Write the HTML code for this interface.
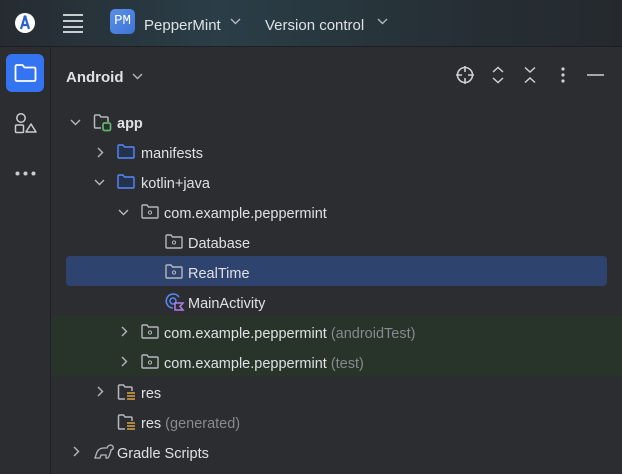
<!DOCTYPE html>
<html><head><style>
*{margin:0;padding:0;box-sizing:border-box}
body{width:622px;height:474px;background:#2b2d30;font-family:"Liberation Sans",sans-serif;color:#dfe1e5;position:relative;overflow:hidden;font-size:14.5px}
.top{position:absolute;left:0;top:0;width:622px;height:47px;background:linear-gradient(90deg,#262b31 0%,#2a3e47 35%,#263036 70%,#25292e 100%);border-bottom:1px solid #1e1f22}
.side{position:absolute;left:0;top:47px;width:51px;height:427px;background:#2b2d30;border-right:1px solid #1e1f22}
.t{position:absolute;white-space:nowrap;line-height:20px;margin-top:1px}
.row{position:absolute;height:30px;left:51px;width:571px}
svg{position:absolute}
.g{color:#868a91}
</style></head><body>
<div class="top">
<svg style="left:14px;top:12px" width="22" height="22" viewBox="0 0 22 22"><circle cx="11" cy="11" r="10" fill="#fff"/><path d="M11 4 L7 17 M11 4 L15 17 M8 13 H14" stroke="#2c5fd6" stroke-width="2.2" fill="none"/><circle cx="11" cy="5" r="1.6" fill="#2c5fd6"/></svg>
<svg style="left:63px;top:13px" width="20" height="20"><path d="M0 2H20M0 8H20M0 14H20M0 19H20" stroke="#c9ccd1" stroke-width="2"/></svg>
<div style="position:absolute;left:110px;top:9px;width:25px;height:25px;border-radius:5px;background:linear-gradient(135deg,#5a8fe8,#3f74d6);color:#fff;font-size:14px;line-height:25px;text-align:center;font-family:'Liberation Mono',monospace">PM</div>
<div class="t" style="left:144px;top:15px;font-size:15px">PepperMint</div>
<svg style="left:230px;top:18px" width="11" height="7"><path d="M1 1L5.5 5.5L10 1" stroke="#b4b8bf" stroke-width="1.4" fill="none"/></svg>
<div class="t" style="left:265px;top:15px;font-size:15px">Version control</div>
<svg style="left:377px;top:18px" width="11" height="7"><path d="M1 1L5.5 5.5L10 1" stroke="#b4b8bf" stroke-width="1.4" fill="none"/></svg>
</div>
<div class="side">
<div style="position:absolute;left:6px;top:7px;width:38px;height:38px;border-radius:6px;background:#3574f0"></div>
<svg style="left:14px;top:17px" width="23" height="18"><path d="M1.5 2.5Q1.5 1 3 1H8.5L10.5 3.5H20Q21.5 3.5 21.5 5V15.5Q21.5 17 20 17H3Q1.5 17 1.5 15.5Z" stroke="#fff" stroke-width="1.8" fill="none"/></svg>
<svg style="left:14px;top:65px" width="24" height="22"><circle cx="7" cy="6" r="4.2" stroke="#c9ccd1" stroke-width="1.5" fill="none"/><rect x="1.5" y="13" width="8" height="7.5" rx="1" stroke="#c9ccd1" stroke-width="1.5" fill="none"/><path d="M17 12L22 20H12Z" stroke="#c9ccd1" stroke-width="1.5" fill="none" stroke-linejoin="round"/></svg>
<svg style="left:15px;top:124px" width="22" height="5"><circle cx="2.5" cy="2.5" r="2" fill="#c9ccd1"/><circle cx="10.5" cy="2.5" r="2" fill="#c9ccd1"/><circle cx="18.5" cy="2.5" r="2" fill="#c9ccd1"/></svg>
</div>
<div class="t" style="left:66px;top:67px;font-weight:bold;font-size:15px">Android</div>
<svg style="left:132px;top:73px" width="11" height="7"><path d="M1 1L5.5 5.5L10 1" stroke="#b4b8bf" stroke-width="1.4" fill="none"/></svg>
<svg style="left:455px;top:65px" width="20" height="20"><circle cx="10" cy="10" r="7.5" stroke="#ced0d6" stroke-width="1.6" fill="none"/><path d="M10 1V7M10 13V19M1 10H7M13 10H19" stroke="#ced0d6" stroke-width="1.6"/></svg>
<svg style="left:491px;top:66px" width="14" height="18"><path d="M2 6L7 1.5L12 6M2 12L7 16.5L12 12" stroke="#ced0d6" stroke-width="1.5" fill="none"/></svg>
<svg style="left:523px;top:66px" width="14" height="18"><path d="M2 1.5L7 6L12 1.5M2 16.5L7 12L12 16.5" stroke="#ced0d6" stroke-width="1.5" fill="none"/></svg>
<svg style="left:561px;top:67px" width="4" height="16"><circle cx="2" cy="2" r="1.6" fill="#ced0d6"/><circle cx="2" cy="8" r="1.6" fill="#ced0d6"/><circle cx="2" cy="14" r="1.6" fill="#ced0d6"/></svg>
<svg style="left:587px;top:74px" width="17" height="2"><path d="M0 1H17" stroke="#ced0d6" stroke-width="1.6"/></svg>

<div style="position:absolute;left:66px;top:256px;width:541px;height:30px;border-radius:4px;background:#2e436e"></div>
<div class="row" style="top:316px;height:60px;background:#283329"></div>

<svg style="left:70px;top:119px" width="11" height="7"><path d="M1 1L5.5 5.5L10 1" stroke="#b4b8bf" stroke-width="1.4" fill="none"/></svg>
<svg style="left:97px;top:147px" width="7" height="11"><path d="M1 1L5.5 5.5L1 10" stroke="#b4b8bf" stroke-width="1.4" fill="none"/></svg>
<svg style="left:94px;top:179px" width="11" height="7"><path d="M1 1L5.5 5.5L10 1" stroke="#b4b8bf" stroke-width="1.4" fill="none"/></svg>
<svg style="left:118px;top:209px" width="11" height="7"><path d="M1 1L5.5 5.5L10 1" stroke="#b4b8bf" stroke-width="1.4" fill="none"/></svg>
<svg style="left:121px;top:326px" width="7" height="11"><path d="M1 1L5.5 5.5L1 10" stroke="#b4b8bf" stroke-width="1.4" fill="none"/></svg>
<svg style="left:121px;top:356px" width="7" height="11"><path d="M1 1L5.5 5.5L1 10" stroke="#b4b8bf" stroke-width="1.4" fill="none"/></svg>
<svg style="left:97px;top:386px" width="7" height="11"><path d="M1 1L5.5 5.5L1 10" stroke="#b4b8bf" stroke-width="1.4" fill="none"/></svg>
<svg style="left:73px;top:446px" width="7" height="11"><path d="M1 1L5.5 5.5L1 10" stroke="#b4b8bf" stroke-width="1.4" fill="none"/></svg>

<svg style="left:93px;top:113px" width="22" height="20"><path d="M1.5 3Q1.5 2 2.5 2H6.5L8 4H14Q15 4 15 5V9M1.5 3V14Q1.5 15 2.5 15H8" stroke="#b4b8bf" stroke-width="1.5" fill="none"/><rect x="10" y="10" width="7.5" height="7.5" rx="1.5" stroke="#5fb865" stroke-width="1.7" fill="none"/></svg>
<div class="t" style="left:117px;top:113px;font-weight:bold">app</div>
<svg style="left:117px;top:144px" width="18" height="15"><path d="M1 2Q1 1 2 1H6L7.5 3H16Q17 3 17 4V13Q17 14 16 14H2Q1 14 1 13Z" stroke="#548af7" stroke-width="1.4" fill="#25324d"/></svg>
<div class="t" style="left:141px;top:143px">manifests</div>
<svg style="left:117px;top:174px" width="18" height="15"><path d="M1 2Q1 1 2 1H6L7.5 3H16Q17 3 17 4V13Q17 14 16 14H2Q1 14 1 13Z" stroke="#548af7" stroke-width="1.4" fill="#25324d"/></svg>
<div class="t" style="left:141px;top:173px">kotlin+java</div>
<svg style="left:141px;top:204px" width="18" height="15"><path d="M1 2Q1 1 2 1H6L7.5 3H16Q17 3 17 4V13Q17 14 16 14H2Q1 14 1 13Z" stroke="#b4b8bf" stroke-width="1.4" fill="none"/><circle cx="9" cy="8.5" r="1.6" stroke="#b4b8bf" fill="none"/></svg>
<div class="t" style="left:164px;top:203px">com.example.peppermint</div>
<svg style="left:165px;top:234px" width="18" height="15"><path d="M1 2Q1 1 2 1H6L7.5 3H16Q17 3 17 4V13Q17 14 16 14H2Q1 14 1 13Z" stroke="#b4b8bf" stroke-width="1.4" fill="none"/><circle cx="9" cy="8.5" r="1.6" stroke="#b4b8bf" fill="none"/></svg>
<div class="t" style="left:188px;top:233px">Database</div>
<svg style="left:165px;top:264px" width="18" height="15"><path d="M1 2Q1 1 2 1H6L7.5 3H16Q17 3 17 4V13Q17 14 16 14H2Q1 14 1 13Z" stroke="#b4b8bf" stroke-width="1.4" fill="none"/><circle cx="9" cy="8.5" r="1.6" stroke="#b4b8bf" fill="none"/></svg>
<div class="t" style="left:188px;top:263px">RealTime</div>
<svg style="left:164px;top:292px" width="22" height="20"><path d="M15 5A7 7 0 1 0 9 16" stroke="#548af7" stroke-width="1.6" fill="none"/><circle cx="9" cy="9" r="3" stroke="#548af7" stroke-width="1.5" fill="none"/><path d="M11 11H19L16 14.5L19 18H11Z" stroke="#b07de8" stroke-width="1.5" fill="none"/></svg>
<div class="t" style="left:188px;top:293px">MainActivity</div>
<svg style="left:141px;top:324px" width="18" height="15"><path d="M1 2Q1 1 2 1H6L7.5 3H16Q17 3 17 4V13Q17 14 16 14H2Q1 14 1 13Z" stroke="#b4b8bf" stroke-width="1.4" fill="none"/><circle cx="9" cy="8.5" r="1.6" stroke="#b4b8bf" fill="none"/></svg>
<div class="t" style="left:164px;top:323px">com.example.peppermint <span class="g">(androidTest)</span></div>
<svg style="left:141px;top:354px" width="18" height="15"><path d="M1 2Q1 1 2 1H6L7.5 3H16Q17 3 17 4V13Q17 14 16 14H2Q1 14 1 13Z" stroke="#b4b8bf" stroke-width="1.4" fill="none"/><circle cx="9" cy="8.5" r="1.6" stroke="#b4b8bf" fill="none"/></svg>
<div class="t" style="left:164px;top:353px">com.example.peppermint <span class="g">(test)</span></div>
<svg style="left:117px;top:383px" width="22" height="18"><path d="M1.5 3Q1.5 2 2.5 2H6.5L8 4H14Q15 4 15 5V8M1.5 3V15Q1.5 16 2.5 16H8" stroke="#b4b8bf" stroke-width="1.5" fill="none"/><path d="M10 10H18M10 13H18M10 16H18" stroke="#d9a343" stroke-width="1.5"/></svg>
<div class="t" style="left:141px;top:383px">res</div>
<svg style="left:117px;top:413px" width="22" height="18"><path d="M1.5 3Q1.5 2 2.5 2H6.5L8 4H14Q15 4 15 5V8M1.5 3V15Q1.5 16 2.5 16H8" stroke="#b4b8bf" stroke-width="1.5" fill="none"/><path d="M10 10H18M10 13H18M10 16H18" stroke="#d9a343" stroke-width="1.5"/></svg>
<div class="t" style="left:141px;top:413px">res <span class="g">(generated)</span></div>
<svg style="left:93px;top:443px" width="22" height="18"><path d="M2 15L4 9Q6 5 11 5L14 5Q15 2 18 2Q21 3 20 6L18 7Q17 12 15 15H13L13 12H8L7 15H5Z" stroke="#b4b8bf" stroke-width="1.3" fill="none"/></svg>
<div class="t" style="left:117px;top:443px">Gradle Scripts</div>
</body></html>
